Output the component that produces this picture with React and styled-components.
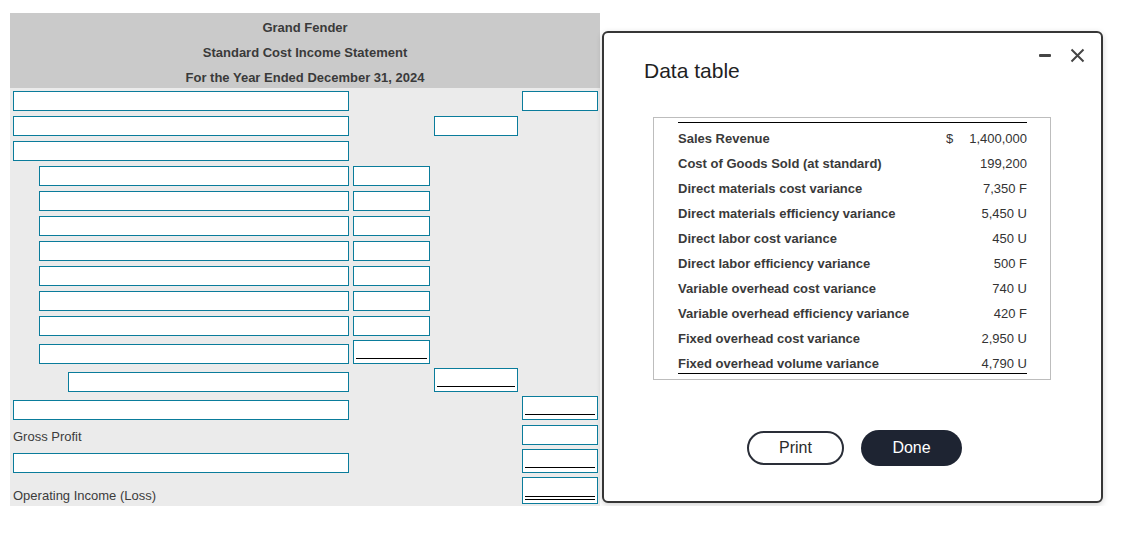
import React from 'react';
import styled, { createGlobalStyle, css } from 'styled-components';

const GlobalStyle = createGlobalStyle`
  html, body {
    margin: 0;
    padding: 0;
    background: #ffffff;
    font-family: "Liberation Sans", Arial, sans-serif;
    color: #333333;
  }
`;

const Page = styled.div`
  display: flex;
  align-items: flex-start;
  gap: 2px;
  padding: 13px 0 0 10px;
`;

const Statement = styled.div`
  width: 590px;
  background: #ebebeb;
`;

const StatementHeader = styled.div`
  box-sizing: border-box;
  height: 75px;
  padding-top: 2px;
  background: #cacaca;
  display: flex;
  flex-direction: column;
  align-items: center;
  font-size: 13px;
  font-weight: 700;
  line-height: 25px;
  color: #3a3a3a;
`;

const Row = styled.div`
  display: grid;
  grid-template-columns: 336px 77px 84px 76px;
  column-gap: 4px;
  align-items: end;
  padding: ${({ $tall }) => ($tall ? '2px 0 2px 3px' : '3px 0 2px 3px')};
`;

const ruleStyles = {
  single: css`
    &::after {
      content: '';
      position: absolute;
      left: 2px;
      right: 2px;
      bottom: 4px;
      border-top: 1px solid #000;
    }
  `,
  double: css`
    &::after {
      content: '';
      position: absolute;
      left: 2px;
      right: 2px;
      bottom: 3px;
      height: 2px;
      border-top: 1px solid #000;
      border-bottom: 1px solid #000;
    }
  `,
};

const AnswerBox = styled.div`
  position: relative;
  box-sizing: border-box;
  height: ${({ $rule }) => ($rule === 'double' ? 27 : $rule ? 24 : 20)}px;
  margin-left: ${({ $indent }) => $indent || 0}px;
  background: #ffffff;
  border: 1px solid #0a7c9b;
  grid-column: ${({ $col }) => $col};
  ${({ $rule }) => $rule && ruleStyles[$rule]}

  input {
    width: 100%;
    height: 100%;
    box-sizing: border-box;
    border: 0;
    outline: none;
    background: transparent;
    font: inherit;
    padding: 0 4px;
  }
`;

const RowLabel = styled.div`
  grid-column: 1;
  font-size: 13px;
  line-height: 23px;
  margin-bottom: -3px;
  color: #3c3c3c;
`;

const Modal = styled.div`
  box-sizing: border-box;
  width: 501px;
  height: 472px;
  margin-top: 18px;
  background: #ffffff;
  border: 2px solid #363636;
  border-radius: 6px;
  box-shadow: 0 2px 6px rgba(0, 0, 0, 0.18);
  padding: 15px 16px 0 0;
  display: flex;
  flex-direction: column;
`;

const ModalHeader = styled.div`
  display: flex;
  justify-content: space-between;
  align-items: flex-start;
`;

const ModalTitle = styled.div`
  margin: 11px 0 0 40px;
  font-size: 21px;
  line-height: 24px;
  color: #1f1f1f;
`;

const WindowControls = styled.div`
  display: flex;
  align-items: center;
  gap: 19px;
  height: 15px;
`;

const MinimizeBar = styled.span`
  display: block;
  width: 12px;
  height: 3px;
  border-radius: 1px;
  background: #454545;
`;

const DataBox = styled.div`
  box-sizing: border-box;
  width: 398px;
  margin: 34px 0 0 49px;
  border: 1px solid #bdbdbd;
  padding: 4px 23px 5px 24px;
`;

const DataTable = styled.div`
  border-top: 1px solid #000;
  border-bottom: 1px solid #000;
`;

const DataRow = styled.div`
  display: grid;
  grid-template-columns: 1fr 12px 69px;
  padding: 7px 0 0;
  line-height: 18px;
  font-size: 13px;
  color: #333333;
`;

const DataLabel = styled.span`
  font-weight: 700;
  color: #3a3a3a;
`;

const DataValue = styled.span`
  text-align: ${({ $align }) => $align || 'right'};
`;

const ButtonRow = styled.div`
  display: flex;
  align-items: center;
  gap: 17px;
  margin: 50px 0 0 143px;
  height: 36px;
`;

const PillButton = styled.button`
  box-sizing: border-box;
  font-family: "Liberation Sans", Arial, sans-serif;
  font-size: 16px;
  cursor: pointer;
  border-radius: 18px;
  ${({ $primary }) =>
    $primary
      ? css`
          width: 101px;
          height: 36px;
          background: #1e2432;
          color: #ffffff;
          border: 0;
        `
      : css`
          width: 97px;
          height: 34px;
          background: #ffffff;
          color: #2b2b2b;
          border: 2px solid #2a2e38;
        `}
`;

const statementRows = [
  { label: 0, right: 'plain' },
  { label: 0, mid: 'plain' },
  { label: 0 },
  { label: 26, amt: 'plain' },
  { label: 26, amt: 'plain' },
  { label: 26, amt: 'plain' },
  { label: 26, amt: 'plain' },
  { label: 26, amt: 'plain' },
  { label: 26, amt: 'plain' },
  { label: 26, amt: 'plain' },
  { label: 26, amt: 'single', tall: true },
  { label: 55, mid: 'single', tall: true },
  { label: 0, right: 'single', tall: true },
  { text: 'Gross Profit', right: 'plain' },
  { label: 0, right: 'single', tall: true },
  { text: 'Operating Income (Loss)', right: 'double', tall: true },
];

const dataRows = [
  ['Sales Revenue', '1,400,000', true],
  ['Cost of Goods Sold (at standard)', '199,200'],
  ['Direct materials cost variance', '7,350 F'],
  ['Direct materials efficiency variance', '5,450 U'],
  ['Direct labor cost variance', '450 U'],
  ['Direct labor efficiency variance', '500 F'],
  ['Variable overhead cost variance', '740 U'],
  ['Variable overhead efficiency variance', '420 F'],
  ['Fixed overhead cost variance', '2,950 U'],
  ['Fixed overhead volume variance', '4,790 U'],
];

const ruleOf = (kind) => (kind === 'plain' ? undefined : kind);

const App = () => {
  return (
    <>
      <GlobalStyle />
      <Page>
        <Statement>
          <StatementHeader>
            <div>Grand Fender</div>
            <div>Standard Cost Income Statement</div>
            <div>For the Year Ended December 31, 2024</div>
          </StatementHeader>
          {statementRows.map((row, i) => (
            <Row key={i} $tall={row.tall}>
              {row.text ? (
                <RowLabel>{row.text}</RowLabel>
              ) : (
                <AnswerBox $col={1} $indent={row.label}>
                  <input type="text" />
                </AnswerBox>
              )}
              {row.amt && (
                <AnswerBox $col={2} $rule={ruleOf(row.amt)}>
                  <input type="text" />
                </AnswerBox>
              )}
              {row.mid && (
                <AnswerBox $col={3} $rule={ruleOf(row.mid)}>
                  <input type="text" />
                </AnswerBox>
              )}
              {row.right && (
                <AnswerBox $col={4} $rule={ruleOf(row.right)}>
                  <input type="text" />
                </AnswerBox>
              )}
            </Row>
          ))}
        </Statement>

        <Modal>
          <ModalHeader>
            <ModalTitle>Data table</ModalTitle>
            <WindowControls>
              <MinimizeBar />
              <svg width="15" height="15" viewBox="0 0 15 15">
                <path d="M1.5 1.5 L13.5 13.5 M13.5 1.5 L1.5 13.5" stroke="#454545" strokeWidth="2" />
              </svg>
            </WindowControls>
          </ModalHeader>
          <DataBox>
            <DataTable>
              {dataRows.map(([label, value, dollar]) => (
                <DataRow key={label}>
                  <DataLabel>{label}</DataLabel>
                  <DataValue $align="left">{dollar ? '$' : ''}</DataValue>
                  <DataValue>{value}</DataValue>
                </DataRow>
              ))}
            </DataTable>
          </DataBox>
          <ButtonRow>
            <PillButton>Print</PillButton>
            <PillButton $primary>Done</PillButton>
          </ButtonRow>
        </Modal>
      </Page>
    </>
  );
};

export default App;
